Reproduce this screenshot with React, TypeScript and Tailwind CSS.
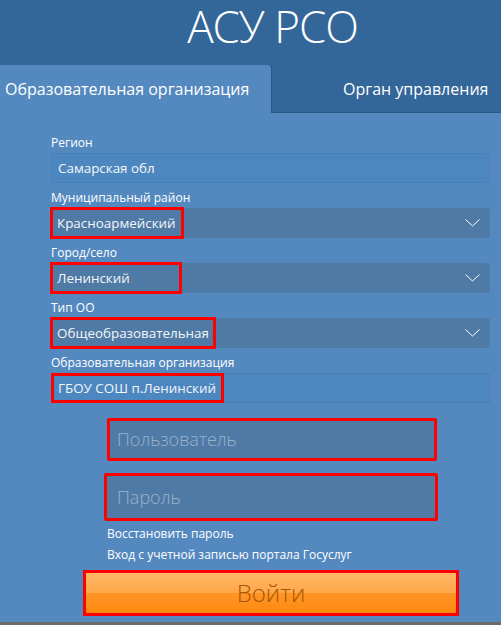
// поля формы выбора организации
interface Field {
  label: string;
  value: string;
  select: boolean;
  mark?: number; // ширина красной рамки
}

const fields: Field[] = [
  { label: 'Регион', value: 'Самарская обл', select: false },
  { label: 'Муниципальный район', value: 'Красноармейский', select: true, mark: 134 },
  { label: 'Город/село', value: 'Ленинский', select: true, mark: 132 },
  { label: 'Тип ОО', value: 'Общеобразовательная', select: true, mark: 166 },
  { label: 'Образовательная организация', value: 'ГБОУ СОШ п.Ленинский', select: false, mark: 173 },
];

function Chevron() {
  return (
    <svg width="15" height="8" viewBox="0 0 15 8" className="text-white">
      <polyline points="0.5,0.5 7.5,7 14.5,0.5" fill="none" stroke="currentColor" strokeWidth="1" />
    </svg>
  );
}

function FieldRow({ f }: { f: Field }) {
  return (
    <div className="flex flex-col">
      <label className="text-[12px] leading-[16px] text-white mb-[2px]">{f.label}</label>
      <div
        className={`relative h-[30px] rounded-[3px] flex items-center pl-[6px] pr-[10px] text-[13.4px] text-[#f4f6f8] ${
          f.select ? 'bg-[#4f7aa6]' : 'bg-[#4d87bf] border border-[#4a80b6]'
        }`}
      >
        <span className="flex-1 truncate">{f.value}</span>
        {f.select && <Chevron />}
        {f.mark && (
          <div
            className="absolute left-[-1px] top-[-1px] bottom-[-1px] border-[3px] border-[#ff0000] pointer-events-none"
            style={{ width: f.mark }}
          />
        )}
      </div>
    </div>
  );
}

function App() {
  return (
    <div
      className="w-full h-[625px] overflow-hidden bg-[#336699] flex flex-col"
      style={{ fontFamily: '"Open Sans", "DejaVu Sans", sans-serif' }}
    >
      {/* заголовок */}
      <div className="h-[65px] flex justify-center pl-[44px] pt-[1px]">
        <h1 className="text-[44px] font-light text-white leading-[50px] tracking-[-1px]">АСУ РСО</h1>
      </div>

      {/* вкладки */}
      <div className="h-[48px] flex">
        <div className="w-[271px] bg-[#5489bf] rounded-tr-[4px] flex items-center pl-[5px] text-[16px] text-white">
          Образовательная организация
        </div>
        <div className="flex-1 border-l border-b border-[#2b5884] flex items-center pl-[71px] text-[16px] text-white">
          Орган управления
        </div>
      </div>

      {/* форма */}
      <div className="flex-1 bg-[#5489bf] flex flex-col">
        <div className="pl-[51px] pr-[11px] pt-[22px] flex flex-col gap-[7px]">
          {fields.map((f) => (
            <FieldRow key={f.label} f={f} />
          ))}
        </div>

        <div className="mt-[15px] ml-[107px] w-[330px] h-[43px] border-[3px] border-[#ff0000] rounded-[2px] bg-[#4f7aa6] flex items-center pl-[7px] text-[18px] font-light text-[#9ab2cb]">
          Пользователь
        </div>
        <div className="mt-[12px] ml-[104px] w-[334px] h-[48px] border-[3px] border-[#ff0000] rounded-[2px] bg-[#4f7aa6] flex items-center pl-[10px] text-[18px] font-light text-[#9ab2cb]">
          Пароль
        </div>

        <div className="ml-[107px] mt-[2px] text-[12px] leading-[21px] text-white">Восстановить пароль</div>
        <div className="ml-[107px] text-[12px] leading-[21px] text-white">Вход с учетной записью портала Госуслуг</div>

        <div className="mt-[5px] ml-[83px] w-[376px] h-[46px] border-[3px] border-[#ff0000] flex flex-col relative">
          <div className="h-1/2 bg-gradient-to-b from-[#ffb868] to-[#ffa848]" />
          <div className="h-1/2 bg-gradient-to-b from-[#ff9526] to-[#ff8a0c]" />
          <div className="absolute inset-0 flex items-center justify-center text-[24px] font-light text-[#a95600]">
            Войти
          </div>
        </div>
      </div>
      <div className="h-[3px] bg-[#6d6a68]" />
    </div>
  );
}

export default App;
